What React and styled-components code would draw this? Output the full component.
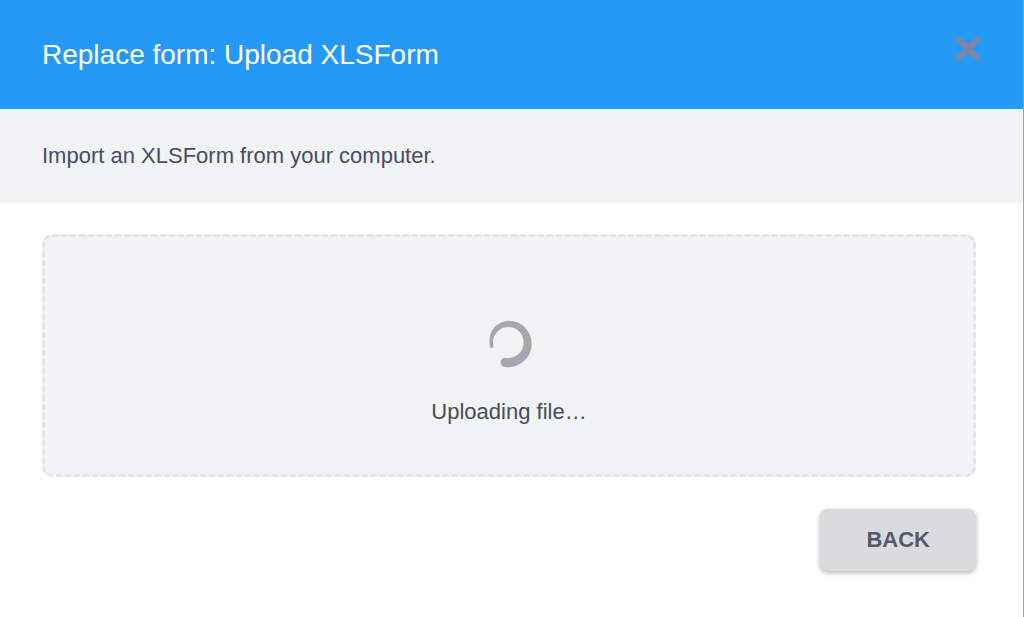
import styled, { createGlobalStyle } from 'styled-components';

const GlobalStyle = createGlobalStyle`
  * {
    box-sizing: border-box;
  }

  body {
    margin: 0;
    background: #ffffff;
    color: #464d5f;
    font-family: "Liberation Sans", Arial, sans-serif;
    font-size: 22px;
    line-height: 28px;
  }
`;

const Modal = styled.main`
  display: flex;
  flex-direction: column;
  min-height: 100vh;
  border-right: 1px solid #a0a3ad;
`;

const Header = styled.header`
  display: flex;
  align-items: flex-start;
  justify-content: space-between;
  padding: 32px 38px 31px 42px;
  background: #2599f6;
  color: #ffffff;
`;

const Title = styled.h1`
  margin: 0;
  font-size: 28px;
  font-weight: 400;
  line-height: 46px;
`;

const CloseButton = styled.button`
  display: flex;
  padding: 0;
  border: 0;
  background: none;
  color: #8086a2;
  cursor: pointer;
`;

const Intro = styled.p`
  margin: 0;
  padding: 33px 42px;
  background: #f2f3f5;
  color: #464d6b;
`;

const Content = styled.section`
  padding: 31px 47px 32px 42px;
`;

const DropZone = styled.div`
  display: flex;
  flex-direction: column;
  align-items: center;
  gap: 29px;
  padding: 82px 24px 48px;
  border: 3px dashed #e4e5ec;
  border-radius: 10px;
  background: #f2f3f5;
`;

const Status = styled.p`
  margin: 0;
`;

const Footer = styled.footer`
  display: flex;
  justify-content: flex-end;
  margin-top: 32px;
`;

const BackButton = styled.button`
  padding: 17px 46px;
  border: 0;
  border-radius: 8px;
  background: #dadbdd;
  box-shadow: 0 2px 5px rgba(0, 0, 0, 0.3);
  color: #555b6b;
  font: inherit;
  font-weight: 700;
  text-transform: uppercase;
  cursor: pointer;
`;

function CloseIcon() {
  return (
    <svg width="34" height="34" viewBox="0 0 34 34" aria-hidden="true">
      <path d="M6 6 28 28M28 6 6 28" stroke="currentColor" strokeWidth="6" />
    </svg>
  );
}

function Spinner() {
  return (
    <svg width="46" height="50" viewBox="-4 0 138 150" aria-hidden="true">
      <path
        fill="#a5a8b1"
        d="M8 84Q6 76 6 66A59 61 0 0 1 65 5A68 70 0 0 1 133 75A70 70 0 0 1 53 144A14 14 0 0 1 55 116A46 46 0 0 0 109 70A46 46 0 0 0 17 70Q17 76 19 81A6 6 0 0 1 8 84Z"
      />
    </svg>
  );
}

export default function App() {
  return (
    <>
      <GlobalStyle />
      <Modal>
        <Header>
          <Title>Replace form: Upload XLSForm</Title>
          <CloseButton type="button" aria-label="Close">
            <CloseIcon />
          </CloseButton>
        </Header>
        <Intro>Import an XLSForm from your computer.</Intro>
        <Content>
          <DropZone>
            <Spinner />
            <Status role="status">Uploading file…</Status>
          </DropZone>
          <Footer>
            <BackButton type="button">Back</BackButton>
          </Footer>
        </Content>
      </Modal>
    </>
  );
}
